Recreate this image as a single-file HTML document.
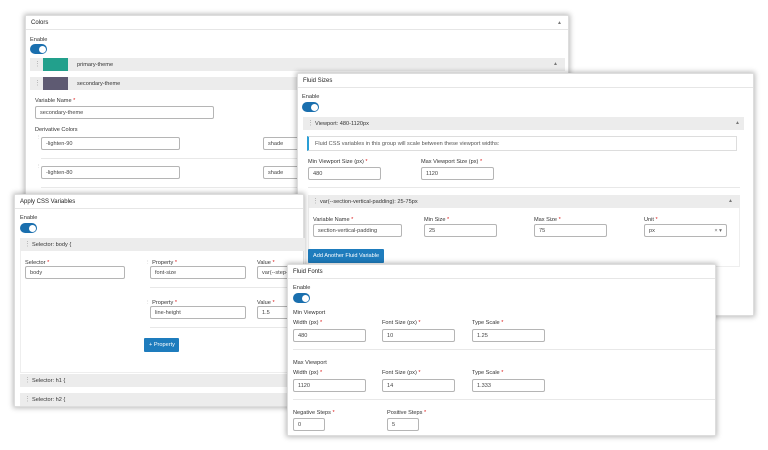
<!DOCTYPE html>
<html><head><meta charset="utf-8">
<style>
*{box-sizing:border-box;margin:0;padding:0}
body{width:768px;height:450px;background:#fff;position:relative;overflow:hidden;font-family:"Liberation Sans",sans-serif;font-size:5.6px;color:#333}
.p{position:absolute;background:#fff;border:1px solid #ddd;box-shadow:0 0 5px 1px rgba(0,0,0,.28)}
.a{position:absolute;white-space:nowrap}
.h{position:absolute;left:0;right:0;top:0;height:14px;border-bottom:1px solid #e6e6e6;padding:4px 0 0 5px;font-size:6px;color:#222}
.tg{position:absolute;width:17px;height:10px;border-radius:5px;background:#1a6fae}
.tg:after{content:"";position:absolute;right:1.5px;top:1.5px;width:7px;height:7px;border-radius:50%;background:#fff}
.row{position:absolute;background:#ececec;height:13px;padding:3.5px 0 0 12px;color:#333}
.row:before{content:"⋮";position:absolute;left:4px;top:2px;color:#aaa;font-size:7px}
.in{position:absolute;height:13px;border:1px solid #b5b5b5;border-radius:2px;background:#fff;padding:3px 0 0 4px;color:#444;font-size:5.6px;overflow:hidden;white-space:nowrap}
.r{color:#d22}
.btn{position:absolute;background:#1e7cbd;color:#fff;height:14px;padding:4px 5px 0;border-radius:1px;white-space:nowrap}
.sep{position:absolute;height:1px;background:#e8e8e8}
.up{position:absolute;color:#777;font-size:5px}
</style></head><body>

<!-- Colors -->
<div class="p" style="left:25px;top:15px;width:544px;height:190px">
 <div class="h">Colors</div><div class="up" style="right:6px;top:4px">▲</div>
 <div class="a" style="left:4px;top:21px">Enable</div>
 <div class="tg" style="left:4px;top:28px"></div>
 <div class="row" style="left:4px;top:42px;width:535px;padding-left:47px">primary-theme</div>
 <div class="a" style="left:17px;top:42px;width:25px;height:13px;background:#22a08c"></div>
 <div class="up" style="left:527px;top:45px">▲</div>
 <div class="row" style="left:4px;top:61px;width:535px;padding-left:47px">secondary-theme</div>
 <div class="a" style="left:17px;top:61px;width:25px;height:13px;background:#5e5a72"></div>
 <div class="a" style="left:9px;top:82px">Variable Name <span class="r">*</span></div>
 <div class="in" style="left:9px;top:90px;width:179px">secondary-theme</div>
 <div class="a" style="left:9px;top:111px">Derivative Colors</div>
 <div class="a" style="left:10px;top:119px;color:#bbb">⋮</div>
 <div class="in" style="left:15px;top:121px;width:139px">-lighten-90</div>
 <div class="in" style="left:237px;top:121px;width:60px">shade</div>
 <div class="sep" style="left:15px;top:142px;width:520px"></div>
 <div class="a" style="left:10px;top:148px;color:#bbb">⋮</div>
 <div class="in" style="left:15px;top:150px;width:139px">-lighten-80</div>
 <div class="in" style="left:237px;top:150px;width:60px">shade</div>
 <div class="sep" style="left:15px;top:171px;width:520px"></div>
</div>

<!-- Fluid Sizes -->
<div class="p" style="left:297px;top:73px;width:457px;height:243px">
 <div class="h">Fluid Sizes</div>
 <div class="a" style="left:4px;top:20px">Enable</div>
 <div class="tg" style="left:4px;top:28px"></div>
 <div class="row" style="left:5px;top:43px;width:441px">Viewport: 480-1120px</div>
 <div class="up" style="left:437px;top:46px">▲</div>
 <div class="a" style="left:9px;top:62px;width:430px;height:15px;border:1px solid #ddd;border-left:2px solid #2a9fd6;padding:4px 0 0 6px;color:#555">Fluid CSS variables in this group will scale between these viewport widths:</div>
 <div class="a" style="left:10px;top:85px">Min Viewport Size (px) <span class="r">*</span></div>
 <div class="in" style="left:10px;top:93px;width:73px">480</div>
 <div class="a" style="left:123px;top:85px">Max Viewport Size (px) <span class="r">*</span></div>
 <div class="in" style="left:123px;top:93px;width:73px">1120</div>
 <div class="sep" style="left:10px;top:113px;width:432px"></div>
 <div class="a" style="left:10px;top:121px;width:432px;height:72px;border:1px solid #eee"></div>
 <div class="row" style="left:10px;top:121px;width:432px">var(--section-vertical-padding): 25-75px</div>
 <div class="up" style="left:430px;top:124px">▲</div>
 <div class="a" style="left:15px;top:143px">Variable Name <span class="r">*</span></div>
 <div class="in" style="left:15px;top:150px;width:89px">section-vertical-padding</div>
 <div class="a" style="left:126px;top:143px">Min Size <span class="r">*</span></div>
 <div class="in" style="left:126px;top:150px;width:73px">25</div>
 <div class="a" style="left:236px;top:143px">Max Size <span class="r">*</span></div>
 <div class="in" style="left:236px;top:150px;width:73px">75</div>
 <div class="a" style="left:346px;top:143px">Unit <span class="r">*</span></div>
 <div class="in" style="left:346px;top:150px;width:83px">px<span style="position:absolute;right:4px;top:3px;color:#666">× ▾</span></div>
 <div class="btn" style="left:10px;top:175px">Add Another Fluid Variable</div>
</div>

<!-- Apply CSS Variables -->
<div class="p" style="left:14px;top:194px;width:290px;height:213px">
 <div class="h">Apply CSS Variables</div>
 <div class="a" style="left:5px;top:20px">Enable</div>
 <div class="tg" style="left:5px;top:28px"></div>
 <div class="row" style="left:5px;top:43px;width:285px">Selector: body {</div>
 <div class="a" style="left:5px;top:56px;width:285px;height:122px;border:1px solid #eee;border-top:0"></div>
 <div class="a" style="left:10px;top:65px">Selector <span class="r">*</span></div>
 <div class="in" style="left:10px;top:71px;width:100px">body</div>
 <div class="a" style="left:130px;top:65px"><span style="color:#bbb">⋮</span> Property <span class="r">*</span></div>
 <div class="in" style="left:135px;top:71px;width:96px">font-size</div>
 <div class="a" style="left:242px;top:65px">Value <span class="r">*</span></div>
 <div class="in" style="left:242px;top:71px;width:50px">var(--step-0)</div>
 <div class="sep" style="left:135px;top:92px;width:160px"></div>
 <div class="a" style="left:130px;top:105px"><span style="color:#bbb">⋮</span> Property <span class="r">*</span></div>
 <div class="in" style="left:135px;top:111px;width:96px">line-height</div>
 <div class="a" style="left:242px;top:105px">Value <span class="r">*</span></div>
 <div class="in" style="left:242px;top:111px;width:50px">1.5</div>
 <div class="sep" style="left:135px;top:132px;width:160px"></div>
 <div class="btn" style="left:129px;top:143px;width:35px">+ Property</div>
 <div class="row" style="left:5px;top:179px;width:285px">Selector: h1 {</div>
 <div class="row" style="left:5px;top:198px;width:285px">Selector: h2 {</div>
</div>

<!-- Fluid Fonts -->
<div class="p" style="left:287px;top:264px;width:429px;height:172px">
 <div class="h">Fluid Fonts</div>
 <div class="a" style="left:5px;top:20px">Enable</div>
 <div class="tg" style="left:5px;top:28px"></div>
 <div class="a" style="left:5px;top:45px">Min Viewport</div>
 <div class="a" style="left:5px;top:55px">Width (px) <span class="r">*</span></div>
 <div class="in" style="left:5px;top:64px;width:73px">480</div>
 <div class="a" style="left:94px;top:55px">Font Size (px) <span class="r">*</span></div>
 <div class="in" style="left:94px;top:64px;width:73px">10</div>
 <div class="a" style="left:184px;top:55px">Type Scale <span class="r">*</span></div>
 <div class="in" style="left:184px;top:64px;width:73px">1.25</div>
 <div class="sep" style="left:5px;top:84px;width:422px"></div>
 <div class="a" style="left:5px;top:95px">Max Viewport</div>
 <div class="a" style="left:5px;top:105px">Width (px) <span class="r">*</span></div>
 <div class="in" style="left:5px;top:114px;width:73px">1120</div>
 <div class="a" style="left:94px;top:105px">Font Size (px) <span class="r">*</span></div>
 <div class="in" style="left:94px;top:114px;width:73px">14</div>
 <div class="a" style="left:184px;top:105px">Type Scale <span class="r">*</span></div>
 <div class="in" style="left:184px;top:114px;width:73px">1.333</div>
 <div class="sep" style="left:5px;top:134px;width:422px"></div>
 <div class="a" style="left:5px;top:145px">Negative Steps <span class="r">*</span></div>
 <div class="in" style="left:5px;top:153px;width:32px">0</div>
 <div class="a" style="left:99px;top:145px">Positive Steps <span class="r">*</span></div>
 <div class="in" style="left:99px;top:153px;width:32px">5</div>
</div>
</body></html>
